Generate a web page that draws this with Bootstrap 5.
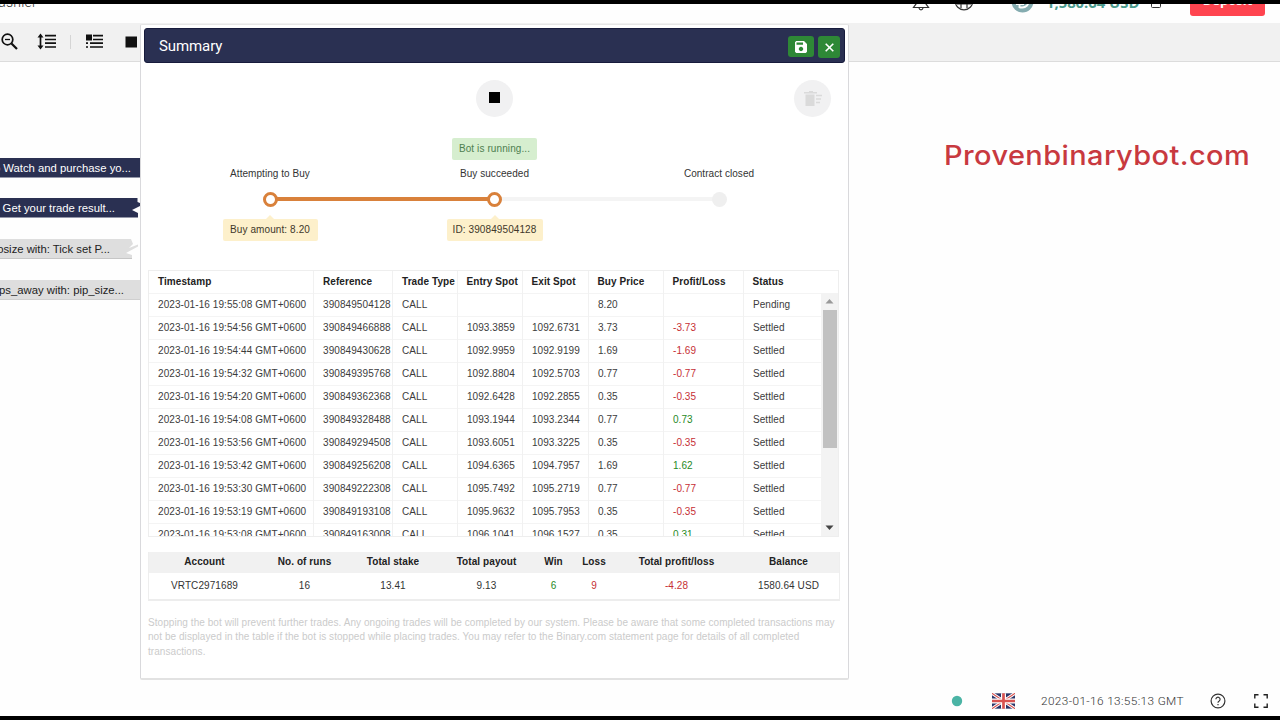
<!DOCTYPE html>
<html lang="en">
<head>
<meta charset="utf-8">
<meta name="viewport" content="width=device-width, initial-scale=1">
<title>Summary</title>
<link href="https://cdn.jsdelivr.net/npm/bootstrap@5.3.0/dist/css/bootstrap.min.css" rel="stylesheet">
<style>
  body { width: 1280px; height: 720px; overflow: hidden; background: #fefefe; font-family: "Liberation Sans", Arial, sans-serif; font-size: 10px; color: #333; line-height: 1; }
  svg { display: block; flex: none; }
  .app { height: 720px; border-top: 4px solid #000; border-bottom: 4px solid #000; }
  .topbar { height: 19px; padding-right: 15px; }
  .topbar .inner { height: 36px; margin-top: -19px; }
  .cashier { font: 300 14px/20px Roboto, sans-serif; color: #333; margin-left: -11px; letter-spacing: .2px; }
  .amount { font: 700 14.8px/20px "Open Sans", sans-serif; color: #4a9a8c; width: 96px; white-space: nowrap; }
  .deposit { width: 75px; height: 31px; background: #ff444f; color: #fff; border-radius: 3px; font: 700 13px/30px "Open Sans", sans-serif; }
  .tools { height: 39px; background: #f1f1f1; border-bottom: 1px solid #dcdcdc; }
  .canvas-area { height: 622px; }
  .block { position: absolute; left: 0; height: 20px; width: 141px; line-height: 20px; font-size: 11.3px; white-space: nowrap; color: #fff; }
  .block svg { position: absolute; left: 0; top: 0; }
  .block span { position: absolute; right: 0; top: 0; }
  .watermark { position: absolute; left: 944px; top: 134px; font: 500 27px/36px Inter, sans-serif; color: #c8393f; letter-spacing: 0.4px; transform: scaleX(1.072); transform-origin: left; }
  .statusbar { height: 32px; padding: 1px 12px 0 0; }
  .stamp { font: 300 11.8px/16px Roboto, sans-serif; color: #333; width: 143px; letter-spacing: .38px; white-space: nowrap; }

  .dialog { position: absolute; left: 140px; top: 24px; width: 709px; height: 656px; background: #fff; border: 1px solid #d9d9dc; border-top-color: #e6e6e6; border-bottom: 2px solid #e2e2e2; border-radius: 2px; padding: 3px 3px 0 3px; }
  .dlg-head { height: 35px; background: #2a3052; border: 1px solid #171b3c; border-radius: 3px; padding: 0 4px 0 14px; color: #fff; }
  .dlg-head h1 { font: 400 15px/20px Roboto, sans-serif; margin: 0; letter-spacing: -.1px; }
  .sq { height: 21px; background: #2e8836; border-radius: 3px; margin-top: 2px; }
  .dlg-body { padding: 0 4px; }
  .controls { height: 75px; padding-top: 17px; }
  .round { width: 37px; height: 37px; border-radius: 50%; background: #f1f1f2; }
  .pill { height: 22px; line-height: 22px; border-radius: 2px; letter-spacing: .1px; font-size: 10px; }
  .running { background: #d6eecf; color: #4e8050; width: 85px; }
  .steps { display: grid; grid-template-columns: repeat(3, 224.5px); justify-content: center; position: relative; }
  .steps > div { display: flex; flex-direction: column; align-items: center; }
  .lab { height: 28px; line-height: 28px; font-size: 10px; letter-spacing: .05px; color: #333; }
  .node { width: 15px; height: 15px; border-radius: 50%; border: 3px solid #d9813b; background: #fff; margin-top: 4px; z-index: 1; }
  .node.off { border: 0; background: #efefef; }
  .track { position: absolute; top: 37px; height: 4px; width: 225px; left: 121px; background: #d9813b; }
  .track.off { left: 346px; background: #f4f4f4; }
  .note { background: #fdf0cb; color: #41382a; margin-top: 12px; position: relative; }
  .note::before { content: ""; position: absolute; left: 50%; top: -4px; margin-left: -4px; border: 4px solid transparent; border-top: 0; border-bottom-color: #fdf0cb; }

  .log { margin-top: 29px; height: 267px; border: 1px solid #eeeeee; overflow: hidden; width: 691px; position: relative; }
  .gr { display: grid; grid-template-columns: 165px 79px 65px 65px 66px 75px 80px 1fr; height: 23px; line-height: 22px; letter-spacing: .08px; font-size: 10px; color: #3c3c3c; }
  .gr > span { padding-left: 9px; border-right: 1px solid #f1f1f1; border-bottom: 1px solid #f4f4f4; white-space: nowrap; }
  .gr > span:last-child { border-right: 0; }
  .gr.hd { font-weight: 700; color: #222; height: 22px; letter-spacing: .08px; }
  .gr.hd > span:nth-child(n+4) { padding-left: 8.500px; }
  .rows { width: 673px; }
  .rows .gr > span { padding-top: .5px; }
  .rows .gr > span:nth-child(n+4) { padding-left: 9px; letter-spacing: .06px; }
  .neg { color: #c62f35 !important; } .pos { color: #1f8a26 !important; }
  .sbar { width: 17px; height: 244px; background: #f3f3f3; }
  .thumb { width: 14px; height: 138px; background: #c1c1c1; }
  .totals { margin-top: 15px; width: 692px; border: 1px solid #eee; border-top: 0; border-bottom: 2px solid #ededed; height: 49px; }
  .tg { display: grid; grid-template-columns: 111px 89px 88px 99px 35px 46px 119px 1fr; text-align: center; letter-spacing: .08px; font-size: 10px; color: #333; }
  .tg > span:last-child { padding-left: 2px; }
  .tg.hd { background: #f1f1f1; font-weight: 700; height: 21px; line-height: 20px; color: #222; }
  .tg.vals { height: 26px; line-height: 26px; }
  .disclaimer { margin: 15px 0 0; font-size: 10px; line-height: 14.3px; color: #cbcbcb; letter-spacing: .06px; white-space: nowrap; }
</style>
</head>
<body>
<div class="app d-flex flex-column position-relative">
  <header class="topbar overflow-hidden">
    <div class="inner d-flex align-items-start">
      <span class="cashier" style="margin-top:7px">Cashier</span>
      <div class="d-flex ms-auto">
        <svg width="18" height="20" viewBox="0 0 18 20" style="margin:7px 24px 0 0" fill="none" stroke="#333" stroke-width="1.2"><path d="M1.5 15.5h15L14 12V7a5 5 0 0 0-10 0v5zM7 16c.5 2.500 3.500 2.500 4 0"/></svg>
        <svg width="20" height="20" viewBox="0 0 20 20" style="margin:6px 37px 0 0" fill="none" stroke="#333" stroke-width="1.200"><circle cx="10" cy="10" r="8.800"/><path d="M7 3v14M13 3v14M3 13h14"/></svg>
        <svg width="23" height="23" viewBox="0 0 23 23" style="margin:5px 12px 0 0"><circle cx="11.500" cy="11.500" r="11" fill="#85acb0"/><path d="M8.500 5v13M8.500 17.500h3a6 6 0 0 0 0-12M5 14h8" fill="none" stroke="#fff" stroke-width="1.800"/></svg>
        <span class="amount" style="margin-top:6.500px">1,580.64 USD</span>
        <svg width="10" height="14" viewBox="0 0 10 14" style="margin:9px 29px 0 9px" fill="none" stroke="#333"><rect x=".5" y="5.500" width="9" height="8" rx="1"/></svg>
        <span class="deposit text-center d-block">Deposit</span>
      </div>
    </div>
  </header>
  <nav class="tools d-flex align-items-center">
    <svg width="140" height="38" viewBox="0 0 140 38">
      <g fill="none" stroke="#111" stroke-width="1.700"><circle cx="7.500" cy="16.500" r="5.300"/><path d="M11.500 20.500l5.500 5.500" stroke-width="2.200"/><path d="M5 16.500h5" stroke-width="1.300"/>
      <path d="M40.500 13v11M45 12.700h11M45 16.500h11M45 20.200h11M45 24h11M93 12.700h10M93 16.500h10M90 20.200h13M90 24h13M86 20.200h2M86 24h2"/></g>
      <path d="M40.500 10.500l3 4h-6zM40.500 26.500l3-4h-6zM86 11.500h6v6h-6zM125.500 13.500H137v11h-11.500z" fill="#111"/>
      <path d="M70.500 12v14" stroke="#d5d5d5"/>
    </svg>
  </nav>
  <main class="canvas-area">
    <div class="block" style="top:154px"><svg width="141" height="20"><path d="M0 0h141v19.500H0z" fill="#2a3052"/></svg><span style="right:10px">to Watch and purchase yo...</span></div>
    <div class="block" style="top:194px"><svg width="141" height="20"><path d="M0 0h137.500v4l2.500 1v3l-8 4 6 3v4.500H0z" fill="#2a3052"/></svg><span style="right:26px">to Get your trade result...</span></div>
    <div class="block" style="top:235px;color:#222"><svg width="141" height="20"><path d="M0 0h131l2 5-4 4 9-3.500v2L126 14l6 2v4H0z" fill="#dedede"/><path d="M0 19.500h132" stroke="#c6c6c6"/></svg><span style="right:31px">posize with: Tick set P...</span></div>
    <div class="block" style="top:276px;color:#222"><svg width="141" height="20"><path d="M0 0h141v20H0z" fill="#dedede"/><path d="M0 19.500h141" stroke="#cfcfcf"/></svg><span style="right:17px">pips_away with: pip_size...</span></div>
    <div class="watermark">Provenbinarybot.com</div>
  </main>
  <footer class="statusbar d-flex align-items-center justify-content-end">
    <svg width="12" height="12" viewBox="0 0 12 12" style="margin-right:29px"><circle cx="6" cy="6" r="5.200" fill="#4bb4a5"/></svg>
    <svg width="23" height="16" viewBox="0 0 60 40" style="margin-right:26px"><path fill="#2a3468" d="M0 0h60v40H0z"/><path d="M0 0l60 40M60 0L0 40" stroke="#fff" stroke-width="8"/><path d="M0 0l60 40M60 0L0 40" stroke="#d8514f" stroke-width="3"/><path d="M30 0v40M0 20h60" stroke="#fff" stroke-width="13"/><path d="M30 0v40M0 20h60" stroke="#d8514f" stroke-width="7"/></svg>
    <span class="stamp">2023-01-16 13:55:13 GMT</span>
    <svg width="16" height="16" viewBox="0 0 16 16" style="margin:0 28px 0 26px" fill="none" stroke="#333" stroke-width="1.200"><circle cx="8" cy="8" r="6.900"/><path d="M5.900 6.300a2.100 2.100 0 1 1 3.300 1.700C8.300 8.500 8 8.900 8 9.800M8 11v1.300"/></svg>
    <svg width="14" height="14" viewBox="0 0 14 14" fill="none" stroke="#222" stroke-width="1.400"><path d="M.8 4.500V.8h3.700M9.500.8h3.700v3.700M13.200 9.500v3.700H9.500M4.500 13.200H.8V9.500"/></svg>
  </footer>
</div>

<section class="dialog">
  <div class="dlg-head d-flex align-items-center">
    <h1>Summary</h1>
    <div class="sq ms-auto d-flex align-items-center justify-content-center" style="width:26px"><svg width="12" height="12" viewBox="0 0 12 12"><path fill="#fff" fill-rule="evenodd" d="M1.200 0H9l3 3v7.800L10.800 12H1.200L0 10.800V1.200zM1.500 1.500v2.300H8V1.500zM6 5.800a2.200 2.200 0 1 0 .01 0z"/></svg></div>
    <div class="sq d-flex align-items-center justify-content-center" style="width:22px;margin-left:4px;height:22px;margin-top:3px"><svg width="9" height="9" viewBox="0 0 9 9"><path d="M.7.7l7.600 7.600M8.300.7L.7 8.300" stroke="#fff" stroke-width="1.600"/></svg></div>
  </div>
  <div class="dlg-body">
    <div class="controls d-flex">
      <div style="width:328px"></div>
      <div class="round"><svg width="37" height="37"><path d="M13 12h11v11H13z" fill="#000"/></svg></div>
      <div class="round" style="margin-left:281px"><svg width="37" height="37"><path d="M10 13.500h13v-1.500h-4v-1h-4v1h-5zM11.500 14.500h9V26h-9z" fill="#dadada"/><path d="M22 15.500h6M22 19h5M22 22.500h4" stroke="#dadada" stroke-width="1.500"/></svg></div>
    </div>
    <div class="text-center"><span class="pill running d-inline-block align-top">Bot is running...</span></div>
    <div class="steps">
      <span class="track"></span><span class="track off"></span>
      <div><span class="lab">Attempting to Buy</span><i class="node"></i><span class="pill note text-center" style="width:95px">Buy amount: 8.20</span></div>
      <div><span class="lab">Buy succeeded</span><i class="node"></i><span class="pill note text-center" style="width:96px">ID: 390849504128</span></div>
      <div><span class="lab">Contract closed</span><i class="node off"></i></div>
    </div>
    <div class="log">
      <div class="gr hd"><span>Timestamp</span><span>Reference</span><span>Trade Type</span><span>Entry Spot</span><span>Exit Spot</span><span>Buy Price</span><span>Profit/Loss</span><span>Status</span></div>
      <div class="d-flex">
        <div class="rows" id="rows"></div>
        <div class="sbar d-flex flex-column align-items-center">
          <svg width="17" height="17"><path d="M8.500 6l4 4.500h-8z" fill="#999"/></svg>
          <div class="thumb"></div>
          <svg class="mt-auto" width="17" height="17"><path d="M8.500 10l4-4.500h-8z" fill="#444"/></svg>
        </div>
      </div>
    </div>
    <div class="totals">
      <div class="tg hd"><span>Account</span><span>No. of runs</span><span>Total stake</span><span>Total payout</span><span>Win</span><span>Loss</span><span>Total profit/loss</span><span>Balance</span></div>
      <div class="tg vals"><span>VRTC2971689</span><span>16</span><span>13.41</span><span>9.13</span><span class="pos">6</span><span class="neg">9</span><span class="neg">-4.28</span><span>1580.64 USD</span></div>
    </div>
    <p class="disclaimer">Stopping the bot will prevent further trades. Any ongoing trades will be completed by our system. Please be aware that some completed transactions may<br>not be displayed in the table if the bot is stopped while placing trades. You may refer to the Binary.com statement page for details of all completed<br>transactions.</p>
  </div>
</section>
<script>
  const trades = [
    ['19:55:08', '390849504128', '', '', '8.20', '', 'Pending'],
    ['19:54:56', '390849466888', '1093.3859', '1092.6731', '3.73', '-3.73', 'Settled'],
    ['19:54:44', '390849430628', '1092.9959', '1092.9199', '1.69', '-1.69', 'Settled'],
    ['19:54:32', '390849395768', '1092.8804', '1092.5703', '0.77', '-0.77', 'Settled'],
    ['19:54:20', '390849362368', '1092.6428', '1092.2855', '0.35', '-0.35', 'Settled'],
    ['19:54:08', '390849328488', '1093.1944', '1093.2344', '0.77', '0.73', 'Settled'],
    ['19:53:56', '390849294508', '1093.6051', '1093.3225', '0.35', '-0.35', 'Settled'],
    ['19:53:42', '390849256208', '1094.6365', '1094.7957', '1.69', '1.62', 'Settled'],
    ['19:53:30', '390849222308', '1095.7492', '1095.2719', '0.77', '-0.77', 'Settled'],
    ['19:53:19', '390849193108', '1095.9632', '1095.7953', '0.35', '-0.35', 'Settled'],
    ['19:53:08', '390849163008', '1096.1041', '1096.1527', '0.35', '0.31', 'Settled']
  ];
  document.getElementById('rows').innerHTML = trades.map(([t, ref, entry, exit, price, pl, status]) =>
    `<div class="gr"><span>2023-01-16 ${t} GMT+0600</span><span>${ref}</span><span>CALL</span><span>${entry}</span><span>${exit}</span><span>${price}</span><span class="${pl.startsWith('-') ? 'neg' : 'pos'}">${pl}</span><span>${status}</span></div>`).join('');
</script>
<script src="https://cdn.jsdelivr.net/npm/bootstrap@5.3.0/dist/js/bootstrap.bundle.min.js"></script>
</body>
</html>
